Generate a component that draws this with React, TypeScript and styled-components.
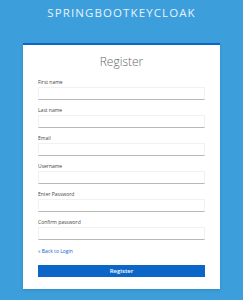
import React from 'react';
import styled, { createGlobalStyle } from 'styled-components';

const GlobalStyle = createGlobalStyle`
  html, body {
    margin: 0;
    padding: 0;
    background: #3c9fdc;
    font-family: 'Open Sans', 'Liberation Sans', sans-serif;
  }
`;

const Page = styled.div`
  width: 243px;
  height: 300px;
  background: #3c9fdc;
  display: flex;
  flex-direction: column;
  align-items: center;
  overflow: hidden;
`;

const Brand = styled.h1`
  margin: 5px 0 0;
  height: 16px;
  line-height: 16px;
  font-size: 11.5px;
  font-weight: 400;
  letter-spacing: 1.1px;
  color: #e6f2fb;
`;

const Card = styled.div`
  margin-top: 22px;
  width: 197px;
  box-sizing: border-box;
  background: #fff;
  border-top: 2px solid #0b66c8;
  padding: 0 15px 12px;
  box-shadow: 0 1px 3px rgba(0, 0, 0, 0.15);
`;

const Title = styled.h2`
  margin: 9px 0 9px;
  height: 16px;
  line-height: 16px;
  text-align: center;
  font-size: 12px;
  font-weight: 300;
  color: #6a6a6a;
`;

const Field = styled.div`
  display: flex;
  flex-direction: column;
  margin-bottom: 7px;
`;

const Label = styled.label`
  height: 7px;
  line-height: 7px;
  font-size: 5px;
  color: #444;
  margin-bottom: 1px;
`;

const Input = styled.input`
  box-sizing: border-box;
  height: 13px;
  width: 100%;
  margin: 0;
  padding: 0 3px;
  background: #fff;
  border: 1px solid #f1f1f1;
  border-bottom: 1px solid #b8b8b8;
  outline: none;
`;

const BackLink = styled.a`
  display: block;
  margin-top: 3px;
  height: 8px;
  line-height: 8px;
  font-size: 5px;
  color: #0b66c8;
  text-decoration: none;
`;

const Submit = styled.button`
  display: block;
  margin-top: 10px;
  width: 100%;
  height: 12px;
  padding: 0;
  border: none;
  background: #0b66c8;
  color: #fff;
  font-family: inherit;
  font-size: 6px;
  font-weight: 600;
  line-height: 12px;
`;

const fields = [
  { label: 'First name', type: 'text' },
  { label: 'Last name', type: 'text' },
  { label: 'Email', type: 'email' },
  { label: 'Username', type: 'text' },
  { label: 'Enter Password', type: 'password' },
  { label: 'Confirm password', type: 'password' },
];

const App: React.FC = () => {
  return (
    <Page>
      <GlobalStyle />
      <Brand>SPRINGBOOTKEYCLOAK</Brand>
      <Card>
        <Title>Register</Title>
        {fields.map((f) => (
          <Field key={f.label}>
            <Label>{f.label}</Label>
            <Input type={f.type} />
          </Field>
        ))}
        <BackLink href='#'>« Back to Login</BackLink>
        <Submit type='button'>Register</Submit>
      </Card>
    </Page>
  );
};

export default App;
